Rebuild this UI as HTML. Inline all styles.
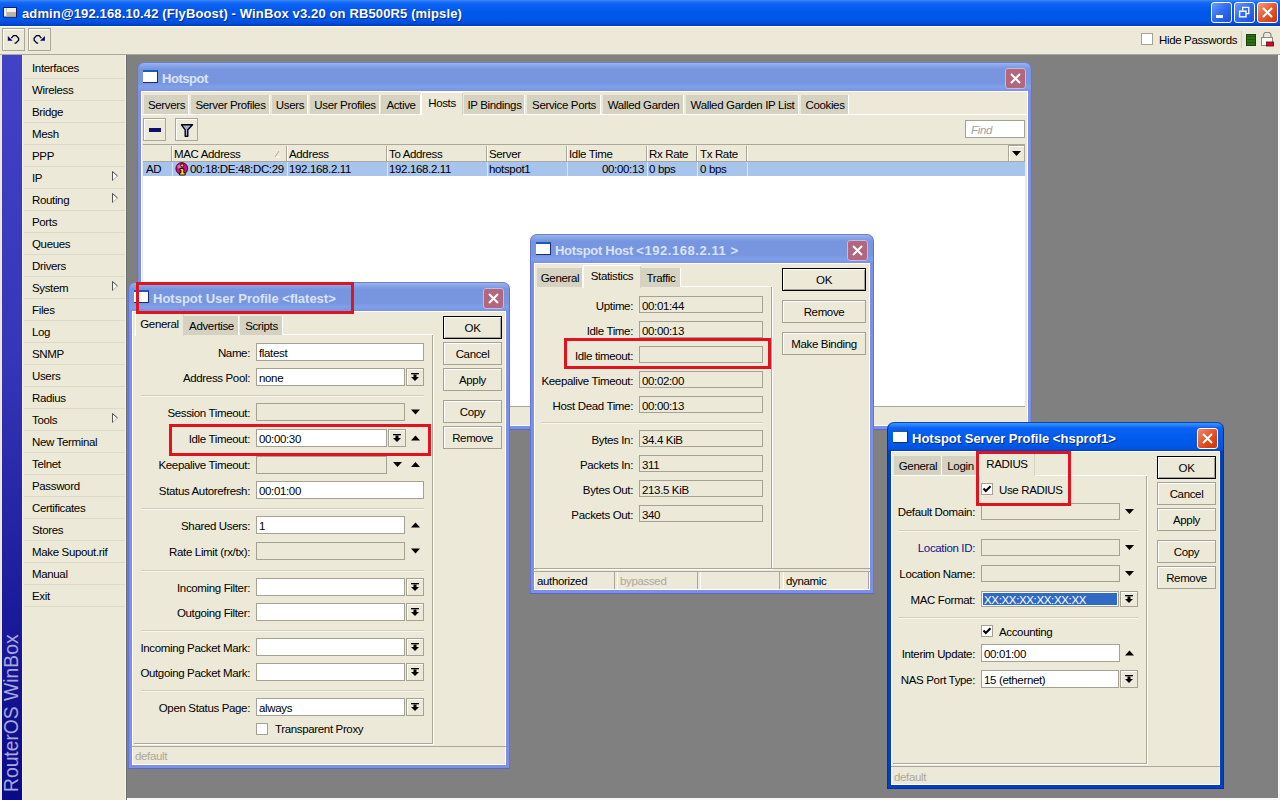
<!DOCTYPE html><html><head><meta charset="utf-8"><style>
*{margin:0;padding:0}
body{width:1280px;height:800px;overflow:hidden;position:relative;background:#808080;font-family:"Liberation Sans",sans-serif;font-size:11.5px;letter-spacing:-0.35px}
.a{position:absolute}
.t{position:absolute;line-height:13px;white-space:nowrap}
.win{position:absolute;box-sizing:border-box;border-radius:7px 7px 0 0;background:linear-gradient(#9AB6EE 0px,#8AA8EA 2px,#7896E0 6px,#7896E0 20px,#7EA0EA 24px,#7D8FE6 28px);border:1px solid #6474D2;border-top-color:#7080B8;border-bottom-color:#5A68C4}
.win.act{background:linear-gradient(#3C96FF 0px,#2A82FA 2px,#0A62F2 5px,#005CEC 14px,#0058E6 22px,#0052DE 26px,#0040C0 28px);border-color:#0030B0;border-top-color:#0846B8}
.wicon{position:absolute;width:15px;height:13px;box-sizing:border-box;background:#fff;border-top:2px solid #1C5AB8;border-bottom:1px solid #1A2F70;border-right:1px solid #1A2F70}
.wt{position:absolute;font-weight:bold;font-size:13px;line-height:16px;white-space:nowrap;letter-spacing:0}
.cbtn{position:absolute;width:21px;height:21px;box-sizing:border-box;border:1px solid #C4B8E8;border-radius:3px;background:#B3677C}
.cbtn svg{position:absolute;left:-1px;top:-1px}
.cbtn.act{background:linear-gradient(135deg,#F08A6C,#E04A1E 60%,#C8340C);border-color:#fff}
</style></head><body>
<div class="a" style="left:0px;top:0px;width:1280px;height:26px;background:linear-gradient(#3D8BF0 0px,#1A6CF8 2px,#0A60F2 5px,#0058EC 12px,#0056E8 20px,#004AD6 24px,#003AB0 26px);"></div>
<svg class="a" style="left:3px;top:7px" width="14" height="11"><rect x="0.5" y="0.5" width="13" height="9.5" fill="#F4F0EC" stroke="#102060" stroke-width="1"/><rect x="4" y="5" width="9" height="4.5" fill="#BFB49A"/><rect x="3" y="1" width="1" height="8.5" fill="#C8C8D0"/></svg>
<div class="wt" style="left:22px;top:6px;color:#fff;font-size:13px;letter-spacing:0.13px;text-shadow:1px 1px 0 #0A2A8A">admin@192.168.10.42 (FlyBoost) - WinBox v3.20 on RB500R5 (mipsle)</div>
<div class="a" style="left:1211px;top:2px;width:21px;height:21px;box-sizing:border-box;border:1px solid #fff;border-radius:3px;background:linear-gradient(135deg,#6A9BFF,#2F6AF0 50%,#1D50D8)"><svg class="a" style="left:-1px;top:-1px" width="21" height="21"><rect x="5" y="13" width="7" height="3" fill="#fff"/></svg></div>
<div class="a" style="left:1234px;top:2px;width:21px;height:21px;box-sizing:border-box;border:1px solid #fff;border-radius:3px;background:linear-gradient(135deg,#6A9BFF,#2F6AF0 50%,#1D50D8)"><svg class="a" style="left:-1px;top:-1px" width="21" height="21"><path d="M8.7 8.6 V5.4 H14.8 V11.6 H12.4" fill="none" stroke="#fff" stroke-width="1.3"/><rect x="5.6" y="9.2" width="6.4" height="5.6" fill="none" stroke="#fff" stroke-width="1.4"/></svg></div>
<div class="a" style="left:1257px;top:2px;width:21px;height:21px;box-sizing:border-box;border:1px solid #fff;border-radius:3px;background:linear-gradient(135deg,#F59B7C,#E35A2E 50%,#C4390F)"><svg class="a" style="left:-1px;top:-1px" width="21" height="21"><path d="M6 6 L15 15 M15 6 L6 15" stroke="#fff" stroke-width="2.2"/></svg></div>
<div class="a" style="left:0px;top:26px;width:1280px;height:29px;background:#ECE9D8;border-top:1px solid #fff;border-bottom:1px solid #ACA899;box-sizing:border-box;"></div>
<div class="a" style="left:2px;top:28px;width:23px;height:23px;box-sizing:border-box;border:1px solid #ACA899;box-shadow:inset 1px 1px 0 #fff;background:#ECE9D8"></div>
<div class="a" style="left:28px;top:28px;width:23px;height:23px;box-sizing:border-box;border:1px solid #ACA899;box-shadow:inset 1px 1px 0 #fff;background:#ECE9D8"></div>
<svg class="a" style="left:2px;top:28px" width="23" height="23"><path d="M9.4 10.2 L11.5 7.6 L14.2 7.6 L16.6 10.2 L16.6 12.3 L13.8 15.2 L12.5 15.2" fill="none" stroke="#000028" stroke-width="1.3"/><polygon points="5.8,7.9 5.8,12.8 10.7,12.8" fill="#0A0A60"/></svg>
<svg class="a" style="left:28px;top:28px" width="23" height="23"><path d="M13.3 10.2 L11.2 7.6 L8.5 7.6 L6.1 10.2 L6.1 12.3 L8.9 15.2 L10.2 15.2" fill="none" stroke="#000028" stroke-width="1.3"/><polygon points="16.9,7.9 16.9,12.8 12.0,12.8" fill="#0A0A60"/></svg>
<div class="a" style="left:1141px;top:33px;width:12px;height:12px;background:#fff;box-sizing:border-box;border:1px solid #A5A293;"></div>
<div class="t" style="top:34px;color:#000;left:1159px;">Hide Passwords</div>
<div class="a" style="left:1241px;top:31px;width:1px;height:17px;background:#D9C8C0;"></div>
<div class="a" style="left:1246px;top:34px;width:10px;height:12px;background:repeating-linear-gradient(#2E6E16 0px,#2E6E16 2px,#22580E 2px,#22580E 3px);box-shadow:inset 0 0 0 1px #1A440A;"></div>
<svg class="a" style="left:1260px;top:31px" width="16" height="16"><path d="M3.5 6.5 V3.5 L5 1.5 H9.5 L11 3.5 V6.5" fill="none" stroke="#8A8A8A" stroke-width="1.2"/><rect x="1.5" y="6.5" width="11" height="8" fill="#F8F8F2" stroke="#8A8A8A" stroke-width="1"/><rect x="6.5" y="11" width="7" height="4" fill="#C8101E" stroke="#700010" stroke-width="0.8"/></svg>
<div class="a" style="left:0px;top:55px;width:127px;height:745px;background:#ECE9D8;"></div>
<div class="a" style="left:2px;top:55px;width:20px;height:745px;background:linear-gradient(#4242C6,#3636B8 40%,#1A1A9A 75%,#0A0A88);"></div>
<div class="a" style="left:22px;top:55px;width:1px;height:745px;background:#F4F4FA;"></div>
<div class="a" style="left:126px;top:55px;width:1px;height:745px;background:#6E6E6E;"></div>
<div class="a" style="left:-68px;top:702px;width:160px;height:20px;transform:rotate(-90deg);color:#A9A9DA;font-size:19.3px;line-height:20px;letter-spacing:0;white-space:nowrap">RouterOS WinBox</div>
<div class="t" style="top:62px;color:#000;left:32px;">Interfaces</div>
<div class="a" style="left:24px;top:78px;width:101px;height:1px;background:#DCD9C8;"></div>
<div class="t" style="top:84px;color:#000;left:32px;">Wireless</div>
<div class="a" style="left:24px;top:100px;width:101px;height:1px;background:#DCD9C8;"></div>
<div class="t" style="top:106px;color:#000;left:32px;">Bridge</div>
<div class="a" style="left:24px;top:122px;width:101px;height:1px;background:#DCD9C8;"></div>
<div class="t" style="top:128px;color:#000;left:32px;">Mesh</div>
<div class="a" style="left:24px;top:144px;width:101px;height:1px;background:#DCD9C8;"></div>
<div class="t" style="top:150px;color:#000;left:32px;">PPP</div>
<div class="a" style="left:24px;top:166px;width:101px;height:1px;background:#DCD9C8;"></div>
<div class="t" style="top:172px;color:#000;left:32px;">IP</div>
<svg class="a" style="left:111px;top:170px" width="8" height="12"><polygon points="1.5,1.5 6.5,6 1.5,10.5" fill="#FAFAF6" stroke="#B8B8B0" stroke-width="1"/><path d="M1.5 1.5 L6.5 6 M1.5 1.5 V10.5" stroke="#555" stroke-width="1" fill="none"/></svg>
<div class="a" style="left:24px;top:188px;width:101px;height:1px;background:#DCD9C8;"></div>
<div class="t" style="top:194px;color:#000;left:32px;">Routing</div>
<svg class="a" style="left:111px;top:192px" width="8" height="12"><polygon points="1.5,1.5 6.5,6 1.5,10.5" fill="#FAFAF6" stroke="#B8B8B0" stroke-width="1"/><path d="M1.5 1.5 L6.5 6 M1.5 1.5 V10.5" stroke="#555" stroke-width="1" fill="none"/></svg>
<div class="a" style="left:24px;top:210px;width:101px;height:1px;background:#DCD9C8;"></div>
<div class="t" style="top:216px;color:#000;left:32px;">Ports</div>
<div class="a" style="left:24px;top:232px;width:101px;height:1px;background:#DCD9C8;"></div>
<div class="t" style="top:238px;color:#000;left:32px;">Queues</div>
<div class="a" style="left:24px;top:254px;width:101px;height:1px;background:#DCD9C8;"></div>
<div class="t" style="top:260px;color:#000;left:32px;">Drivers</div>
<div class="a" style="left:24px;top:276px;width:101px;height:1px;background:#DCD9C8;"></div>
<div class="t" style="top:282px;color:#000;left:32px;">System</div>
<svg class="a" style="left:111px;top:280px" width="8" height="12"><polygon points="1.5,1.5 6.5,6 1.5,10.5" fill="#FAFAF6" stroke="#B8B8B0" stroke-width="1"/><path d="M1.5 1.5 L6.5 6 M1.5 1.5 V10.5" stroke="#555" stroke-width="1" fill="none"/></svg>
<div class="a" style="left:24px;top:298px;width:101px;height:1px;background:#DCD9C8;"></div>
<div class="t" style="top:304px;color:#000;left:32px;">Files</div>
<div class="a" style="left:24px;top:320px;width:101px;height:1px;background:#DCD9C8;"></div>
<div class="t" style="top:326px;color:#000;left:32px;">Log</div>
<div class="a" style="left:24px;top:342px;width:101px;height:1px;background:#DCD9C8;"></div>
<div class="t" style="top:348px;color:#000;left:32px;">SNMP</div>
<div class="a" style="left:24px;top:364px;width:101px;height:1px;background:#DCD9C8;"></div>
<div class="t" style="top:370px;color:#000;left:32px;">Users</div>
<div class="a" style="left:24px;top:386px;width:101px;height:1px;background:#DCD9C8;"></div>
<div class="t" style="top:392px;color:#000;left:32px;">Radius</div>
<div class="a" style="left:24px;top:408px;width:101px;height:1px;background:#DCD9C8;"></div>
<div class="t" style="top:414px;color:#000;left:32px;">Tools</div>
<svg class="a" style="left:111px;top:412px" width="8" height="12"><polygon points="1.5,1.5 6.5,6 1.5,10.5" fill="#FAFAF6" stroke="#B8B8B0" stroke-width="1"/><path d="M1.5 1.5 L6.5 6 M1.5 1.5 V10.5" stroke="#555" stroke-width="1" fill="none"/></svg>
<div class="a" style="left:24px;top:430px;width:101px;height:1px;background:#DCD9C8;"></div>
<div class="t" style="top:436px;color:#000;left:32px;">New Terminal</div>
<div class="a" style="left:24px;top:452px;width:101px;height:1px;background:#DCD9C8;"></div>
<div class="t" style="top:458px;color:#000;left:32px;">Telnet</div>
<div class="a" style="left:24px;top:474px;width:101px;height:1px;background:#DCD9C8;"></div>
<div class="t" style="top:480px;color:#000;left:32px;">Password</div>
<div class="a" style="left:24px;top:496px;width:101px;height:1px;background:#DCD9C8;"></div>
<div class="t" style="top:502px;color:#000;left:32px;">Certificates</div>
<div class="a" style="left:24px;top:518px;width:101px;height:1px;background:#DCD9C8;"></div>
<div class="t" style="top:524px;color:#000;left:32px;">Stores</div>
<div class="a" style="left:24px;top:540px;width:101px;height:1px;background:#DCD9C8;"></div>
<div class="t" style="top:546px;color:#000;left:32px;">Make Supout.rif</div>
<div class="a" style="left:24px;top:562px;width:101px;height:1px;background:#DCD9C8;"></div>
<div class="t" style="top:568px;color:#000;left:32px;">Manual</div>
<div class="a" style="left:24px;top:584px;width:101px;height:1px;background:#DCD9C8;"></div>
<div class="t" style="top:590px;color:#000;left:32px;">Exit</div>
<div class="a" style="left:24px;top:606px;width:101px;height:1px;background:#DCD9C8;"></div>
<div class="a" style="left:127px;top:798px;width:1153px;height:2px;background:#F8F8F8;"></div>
<div class="a" style="left:1278px;top:55px;width:2px;height:745px;background:#F8F8F8;"></div>
<div class="a" style="left:125px;top:55px;width:1px;height:745px;background:#F6F3E6;"></div>
<div class="win" style="left:137px;top:62px;width:895px;height:368px"></div>
<div class="a" style="left:141px;top:91px;width:887px;height:335px;background:#ECE9D8;box-shadow:inset 1px 1px 0 #fff, inset -1px -1px 0 #fff;"></div>
<div class="wicon" style="left:143px;top:70px"></div>
<div class="wt" style="left:162px;top:71px;color:#D8E4F8;"><span style="letter-spacing:-0.45px">Hotspot</span></div>
<div class="cbtn" style="left:1005px;top:68px"><svg width="21" height="21"><path d="M6 6 L15 15 M15 6 L6 15" stroke="#fff" stroke-width="2"/></svg></div>
<div class="a" style="left:141px;top:114px;width:887px;height:1px;background:#fff;"></div>
<div class="a" style="left:144px;top:95px;width:45px;height:19px;background:#D6D2C2;box-shadow:inset -1px 0 0 #fff;"></div>
<div class="t" style="left:144px;width:45px;text-align:center;top:99px">Servers</div>
<div class="a" style="left:191px;top:95px;width:79px;height:19px;background:#D6D2C2;box-shadow:inset -1px 0 0 #fff;"></div>
<div class="t" style="left:191px;width:79px;text-align:center;top:99px">Server Profiles</div>
<div class="a" style="left:272px;top:95px;width:36px;height:19px;background:#D6D2C2;box-shadow:inset -1px 0 0 #fff;"></div>
<div class="t" style="left:272px;width:36px;text-align:center;top:99px">Users</div>
<div class="a" style="left:310px;top:95px;width:70px;height:19px;background:#D6D2C2;box-shadow:inset -1px 0 0 #fff;"></div>
<div class="t" style="left:310px;width:70px;text-align:center;top:99px">User Profiles</div>
<div class="a" style="left:381px;top:95px;width:40px;height:19px;background:#D6D2C2;box-shadow:inset -1px 0 0 #fff;"></div>
<div class="t" style="left:381px;width:40px;text-align:center;top:99px">Active</div>
<div class="a" style="left:464px;top:95px;width:61px;height:19px;background:#D6D2C2;box-shadow:inset -1px 0 0 #fff;"></div>
<div class="t" style="left:464px;width:61px;text-align:center;top:99px">IP Bindings</div>
<div class="a" style="left:527px;top:95px;width:74px;height:19px;background:#D6D2C2;box-shadow:inset -1px 0 0 #fff;"></div>
<div class="t" style="left:527px;width:74px;text-align:center;top:99px">Service Ports</div>
<div class="a" style="left:603px;top:95px;width:81px;height:19px;background:#D6D2C2;box-shadow:inset -1px 0 0 #fff;"></div>
<div class="t" style="left:603px;width:81px;text-align:center;top:99px">Walled Garden</div>
<div class="a" style="left:686px;top:95px;width:113px;height:19px;background:#D6D2C2;box-shadow:inset -1px 0 0 #fff;"></div>
<div class="t" style="left:686px;width:113px;text-align:center;top:99px">Walled Garden IP List</div>
<div class="a" style="left:801px;top:95px;width:48px;height:19px;background:#D6D2C2;box-shadow:inset -1px 0 0 #fff;"></div>
<div class="t" style="left:801px;width:48px;text-align:center;top:99px">Cookies</div>
<div class="a" style="left:421px;top:92px;width:42px;height:23px;background:#ECE9D8;box-shadow:inset 1px 1px 0 #fff, inset -1px 0 0 #D6D2C2;"></div>
<div class="t" style="left:421px;width:42px;text-align:center;top:97px">Hosts</div>
<div class="a" style="left:143px;top:118px;width:23px;height:23px;box-sizing:border-box;border:1px solid #ACA899;box-shadow:inset 1px 1px 0 #fff;background:#ECE9D8"></div>
<div class="a" style="left:175px;top:118px;width:23px;height:23px;box-sizing:border-box;border:1px solid #ACA899;box-shadow:inset 1px 1px 0 #fff;background:#ECE9D8"></div>
<div class="a" style="left:149px;top:128px;width:12px;height:4px;background:#10106A;"></div>
<svg class="a" style="left:175px;top:118px" width="22" height="23"><path d="M6.5 6.8 H17.5 L12.8 11.8 V18.2 H10.2 V11.8 Z" fill="#A9B0C6" stroke="#000018" stroke-width="1.4" stroke-linejoin="round"/></svg>
<div class="a" style="left:965px;top:120px;width:60px;height:18px;background:#fff;box-sizing:border-box;border:1px solid #A5A293;"></div>
<div class="t" style="top:124px;color:#A0A0A0;left:971px;font-style:italic;">Find</div>
<div class="a" style="left:143px;top:145px;width:882px;height:262px;background:#fff;"></div>
<div class="a" style="left:143px;top:144px;width:882px;height:18px;background:#ECE9D8;border-bottom:1px solid #ACA899;border-top:1px solid #ACA899;box-sizing:border-box;"></div>
<div class="a" style="left:171px;top:146px;width:1px;height:15px;background:#ACA899;"></div>
<div class="a" style="left:172px;top:146px;width:1px;height:15px;background:#fff;"></div>
<div class="a" style="left:286px;top:146px;width:1px;height:15px;background:#ACA899;"></div>
<div class="a" style="left:287px;top:146px;width:1px;height:15px;background:#fff;"></div>
<div class="a" style="left:386px;top:146px;width:1px;height:15px;background:#ACA899;"></div>
<div class="a" style="left:387px;top:146px;width:1px;height:15px;background:#fff;"></div>
<div class="a" style="left:486px;top:146px;width:1px;height:15px;background:#ACA899;"></div>
<div class="a" style="left:487px;top:146px;width:1px;height:15px;background:#fff;"></div>
<div class="a" style="left:566px;top:146px;width:1px;height:15px;background:#ACA899;"></div>
<div class="a" style="left:567px;top:146px;width:1px;height:15px;background:#fff;"></div>
<div class="a" style="left:646px;top:146px;width:1px;height:15px;background:#ACA899;"></div>
<div class="a" style="left:647px;top:146px;width:1px;height:15px;background:#fff;"></div>
<div class="a" style="left:696px;top:146px;width:1px;height:15px;background:#ACA899;"></div>
<div class="a" style="left:697px;top:146px;width:1px;height:15px;background:#fff;"></div>
<div class="a" style="left:746px;top:146px;width:1px;height:15px;background:#ACA899;"></div>
<div class="a" style="left:747px;top:146px;width:1px;height:15px;background:#fff;"></div>
<div class="a" style="left:1008px;top:146px;width:1px;height:15px;background:#ACA899;"></div>
<div class="a" style="left:1009px;top:146px;width:1px;height:15px;background:#fff;"></div>
<div class="a" style="left:1008px;top:145px;width:17px;height:17px;box-sizing:border-box;border:1px solid #ACA899;background:#ECE9D8;box-shadow:inset 1px 1px 0 #fff;"></div>
<svg class="a" style="left:0;top:0;width:1px;height:1px;overflow:visible"><polygon points="1012.0,151.0 1021.0,151.0 1016.5,156.0" fill="#000"/></svg>
<div class="t" style="top:148px;color:#000;left:174px;">MAC Address</div>
<div class="t" style="top:148px;color:#000;left:289px;">Address</div>
<div class="t" style="top:148px;color:#000;left:389px;">To Address</div>
<div class="t" style="top:148px;color:#000;left:489px;">Server</div>
<div class="t" style="top:148px;color:#000;left:569px;">Idle Time</div>
<div class="t" style="top:148px;color:#000;left:649px;">Rx Rate</div>
<div class="t" style="top:148px;color:#000;left:700px;">Tx Rate</div>
<svg class="a" style="left:274px;top:149px" width="8" height="10"><path d="M1 8 L5 2" stroke="#B0AEA0" stroke-width="1"/><path d="M2 8 L6 8" stroke="#fff" stroke-width="1"/></svg>
<div class="a" style="left:143px;top:162px;width:882px;height:14px;background:#A6C4EC;"></div>
<div class="a" style="left:172px;top:162px;width:1px;height:14px;background:#D8E6F8;"></div>
<div class="a" style="left:287px;top:162px;width:1px;height:14px;background:#D8E6F8;"></div>
<div class="a" style="left:387px;top:162px;width:1px;height:14px;background:#D8E6F8;"></div>
<div class="a" style="left:487px;top:162px;width:1px;height:14px;background:#D8E6F8;"></div>
<div class="a" style="left:567px;top:162px;width:1px;height:14px;background:#D8E6F8;"></div>
<div class="a" style="left:647px;top:162px;width:1px;height:14px;background:#D8E6F8;"></div>
<div class="a" style="left:697px;top:162px;width:1px;height:14px;background:#D8E6F8;"></div>
<div class="a" style="left:747px;top:162px;width:1px;height:14px;background:#D8E6F8;"></div>
<div class="t" style="top:163px;color:#000;left:146px;">AD</div>
<svg class="a" style="left:175px;top:162px" width="14" height="14"><circle cx="6.8" cy="6.5" r="5.9" fill="#C8107E" stroke="#300020" stroke-width="0.9"/><circle cx="4.6" cy="4.6" r="2.2" fill="#F060B8"/><circle cx="7.2" cy="3.4" r="1.6" fill="#E8D020" stroke="#200010" stroke-width="0.9"/><path d="M4.8 6.6 H8.8 V10.8 H10.2 V13 H4.6 V10.8 H6 V8.2 H4.8 Z" fill="#F8E020" stroke="#000" stroke-width="0.9"/></svg>
<div class="t" style="top:163px;color:#000;left:190px;">00:18:DE:48:DC:29</div>
<div class="t" style="top:163px;color:#000;left:289px;">192.168.2.11</div>
<div class="t" style="top:163px;color:#000;left:389px;">192.168.2.11</div>
<div class="t" style="top:163px;color:#000;left:489px;">hotspot1</div>
<div class="t" style="top:163px;color:#000;right:636px;text-align:right;">00:00:13</div>
<div class="t" style="top:163px;color:#000;left:649px;">0 bps</div>
<div class="t" style="top:163px;color:#000;left:700px;">0 bps</div>
<div class="a" style="left:141px;top:406px;width:884px;height:1px;background:#ACA899;"></div>
<div class="win" style="left:128px;top:282px;width:382px;height:487px"></div>
<div class="a" style="left:132px;top:311px;width:374px;height:454px;background:#ECE9D8;box-shadow:inset 1px 1px 0 #fff, inset -1px -1px 0 #fff;"></div>
<div class="wicon" style="left:134px;top:290px"></div>
<div class="wt" style="left:153px;top:291px;color:#D8E4F8;">Hotspot User Profile &lt;flatest&gt;</div>
<div class="cbtn" style="left:483px;top:288px"><svg width="21" height="21"><path d="M6 6 L15 15 M15 6 L6 15" stroke="#fff" stroke-width="2"/></svg></div>
<div class="a" style="left:134px;top:334px;width:299px;height:1px;background:#fff;"></div>
<div class="a" style="left:184px;top:316px;width:55px;height:19px;background:#D6D2C2;box-shadow:inset -1px 0 0 #fff;"></div>
<div class="t" style="left:184px;width:55px;text-align:center;top:320px">Advertise</div>
<div class="a" style="left:240px;top:316px;width:43px;height:19px;background:#D6D2C2;box-shadow:inset -1px 0 0 #fff;"></div>
<div class="t" style="left:240px;width:43px;text-align:center;top:320px">Scripts</div>
<div class="a" style="left:135px;top:313px;width:49px;height:23px;background:#ECE9D8;box-shadow:inset 1px 1px 0 #fff, inset -1px 0 0 #D6D2C2;"></div>
<div class="t" style="left:135px;width:49px;text-align:center;top:318px">General</div>
<div class="a" style="left:134px;top:335px;width:299px;height:409px;box-sizing:border-box;border-right:1px solid #ACA899;border-bottom:1px solid #ACA899;box-shadow:1px 1px 0 #fff;"></div>
<div class="t" style="top:347px;color:#000;right:1030px;text-align:right;">Name:</div>
<div class="a" style="left:256px;top:343px;width:168px;height:18px;background:#fff;box-sizing:border-box;border:1px solid #A5A293;"></div>
<div class="t" style="top:347px;color:#000;left:259px;">flatest</div>
<div class="t" style="top:372px;color:#000;right:1030px;text-align:right;">Address Pool:</div>
<div class="a" style="left:256px;top:368px;width:149px;height:18px;background:#fff;box-sizing:border-box;border:1px solid #A5A293;"></div>
<div class="t" style="top:372px;color:#000;left:259px;">none</div>
<div class="a" style="left:406px;top:368px;width:18px;height:18px;background:#ECE9D8;box-sizing:border-box;border:1px solid #A5A293;box-shadow:inset 1px 1px 0 #fff;"></div>
<svg class="a" style="left:406px;top:368px" width="18" height="18"><rect x="5.0" y="5.0" width="8" height="1.3" fill="#000"/><polygon points="5.0,9.0 13.0,9.0 9.0,13.0" fill="#000"/><rect x="7.5" y="6.5" width="3" height="3" fill="#000"/></svg>
<div class="a" style="left:141px;top:395px;width:283px;height:2px;border-top:1px solid #D3CFBF;border-bottom:1px solid #F8F6EE;box-sizing:border-box;"></div>
<div class="t" style="top:407px;color:#000;right:1030px;text-align:right;">Session Timeout:</div>
<div class="a" style="left:256px;top:403px;width:149px;height:18px;background:#ECE9D8;box-sizing:border-box;border:1px solid #A5A293;"></div>
<svg class="a" style="left:0;top:0;width:1px;height:1px;overflow:visible"><polygon points="411.0,409.5 420.0,409.5 415.5,414.5" fill="#000"/></svg>
<div class="t" style="top:433px;color:#000;right:1030px;text-align:right;">Idle Timeout:</div>
<div class="a" style="left:256px;top:429px;width:131px;height:18px;background:#fff;box-sizing:border-box;border:1px solid #A5A293;"></div>
<div class="t" style="top:433px;color:#000;left:259px;">00:00:30</div>
<div class="a" style="left:388px;top:429px;width:18px;height:18px;background:#ECE9D8;box-sizing:border-box;border:1px solid #A5A293;box-shadow:inset 1px 1px 0 #fff;"></div>
<svg class="a" style="left:388px;top:429px" width="18" height="18"><rect x="5.0" y="5.0" width="8" height="1.3" fill="#000"/><polygon points="5.0,9.0 13.0,9.0 9.0,13.0" fill="#000"/><rect x="7.5" y="6.5" width="3" height="3" fill="#000"/></svg>
<svg class="a" style="left:0;top:0;width:1px;height:1px;overflow:visible"><polygon points="411.0,440.5 420.0,440.5 415.5,435.5" fill="#000"/></svg>
<div class="t" style="top:459px;color:#000;right:1030px;text-align:right;">Keepalive Timeout:</div>
<div class="a" style="left:256px;top:456px;width:131px;height:18px;background:#ECE9D8;box-sizing:border-box;border:1px solid #A5A293;"></div>
<svg class="a" style="left:0;top:0;width:1px;height:1px;overflow:visible"><polygon points="393.0,462.0 402.0,462.0 397.5,467.0" fill="#000"/></svg>
<svg class="a" style="left:0;top:0;width:1px;height:1px;overflow:visible"><polygon points="411.0,467.0 420.0,467.0 415.5,462.0" fill="#000"/></svg>
<div class="t" style="top:485px;color:#000;right:1030px;text-align:right;">Status Autorefresh:</div>
<div class="a" style="left:256px;top:481px;width:168px;height:18px;background:#fff;box-sizing:border-box;border:1px solid #A5A293;"></div>
<div class="t" style="top:485px;color:#000;left:259px;">00:01:00</div>
<div class="a" style="left:141px;top:508px;width:283px;height:2px;border-top:1px solid #D3CFBF;border-bottom:1px solid #F8F6EE;box-sizing:border-box;"></div>
<div class="t" style="top:520px;color:#000;right:1030px;text-align:right;">Shared Users:</div>
<div class="a" style="left:256px;top:516px;width:149px;height:18px;background:#fff;box-sizing:border-box;border:1px solid #A5A293;"></div>
<div class="t" style="top:520px;color:#000;left:259px;">1</div>
<svg class="a" style="left:0;top:0;width:1px;height:1px;overflow:visible"><polygon points="411.0,527.5 420.0,527.5 415.5,522.5" fill="#000"/></svg>
<div class="t" style="top:546px;color:#000;right:1030px;text-align:right;">Rate Limit (rx/tx):</div>
<div class="a" style="left:256px;top:542px;width:149px;height:18px;background:#ECE9D8;box-sizing:border-box;border:1px solid #A5A293;"></div>
<svg class="a" style="left:0;top:0;width:1px;height:1px;overflow:visible"><polygon points="411.0,548.5 420.0,548.5 415.5,553.5" fill="#000"/></svg>
<div class="a" style="left:141px;top:570px;width:283px;height:2px;border-top:1px solid #D3CFBF;border-bottom:1px solid #F8F6EE;box-sizing:border-box;"></div>
<div class="t" style="top:582px;color:#000;right:1030px;text-align:right;">Incoming Filter:</div>
<div class="a" style="left:256px;top:578px;width:149px;height:18px;background:#fff;box-sizing:border-box;border:1px solid #A5A293;"></div>
<div class="a" style="left:406px;top:578px;width:18px;height:18px;background:#ECE9D8;box-sizing:border-box;border:1px solid #A5A293;box-shadow:inset 1px 1px 0 #fff;"></div>
<svg class="a" style="left:406px;top:578px" width="18" height="18"><rect x="5.0" y="5.0" width="8" height="1.3" fill="#000"/><polygon points="5.0,9.0 13.0,9.0 9.0,13.0" fill="#000"/><rect x="7.5" y="6.5" width="3" height="3" fill="#000"/></svg>
<div class="t" style="top:607px;color:#000;right:1030px;text-align:right;">Outgoing Filter:</div>
<div class="a" style="left:256px;top:603px;width:149px;height:18px;background:#fff;box-sizing:border-box;border:1px solid #A5A293;"></div>
<div class="a" style="left:406px;top:603px;width:18px;height:18px;background:#ECE9D8;box-sizing:border-box;border:1px solid #A5A293;box-shadow:inset 1px 1px 0 #fff;"></div>
<svg class="a" style="left:406px;top:603px" width="18" height="18"><rect x="5.0" y="5.0" width="8" height="1.3" fill="#000"/><polygon points="5.0,9.0 13.0,9.0 9.0,13.0" fill="#000"/><rect x="7.5" y="6.5" width="3" height="3" fill="#000"/></svg>
<div class="a" style="left:141px;top:630px;width:283px;height:2px;border-top:1px solid #D3CFBF;border-bottom:1px solid #F8F6EE;box-sizing:border-box;"></div>
<div class="t" style="top:642px;color:#000;right:1030px;text-align:right;">Incoming Packet Mark:</div>
<div class="a" style="left:256px;top:638px;width:149px;height:18px;background:#fff;box-sizing:border-box;border:1px solid #A5A293;"></div>
<div class="a" style="left:406px;top:638px;width:18px;height:18px;background:#ECE9D8;box-sizing:border-box;border:1px solid #A5A293;box-shadow:inset 1px 1px 0 #fff;"></div>
<svg class="a" style="left:406px;top:638px" width="18" height="18"><rect x="5.0" y="5.0" width="8" height="1.3" fill="#000"/><polygon points="5.0,9.0 13.0,9.0 9.0,13.0" fill="#000"/><rect x="7.5" y="6.5" width="3" height="3" fill="#000"/></svg>
<div class="t" style="top:667px;color:#000;right:1030px;text-align:right;">Outgoing Packet Mark:</div>
<div class="a" style="left:256px;top:663px;width:149px;height:18px;background:#fff;box-sizing:border-box;border:1px solid #A5A293;"></div>
<div class="a" style="left:406px;top:663px;width:18px;height:18px;background:#ECE9D8;box-sizing:border-box;border:1px solid #A5A293;box-shadow:inset 1px 1px 0 #fff;"></div>
<svg class="a" style="left:406px;top:663px" width="18" height="18"><rect x="5.0" y="5.0" width="8" height="1.3" fill="#000"/><polygon points="5.0,9.0 13.0,9.0 9.0,13.0" fill="#000"/><rect x="7.5" y="6.5" width="3" height="3" fill="#000"/></svg>
<div class="a" style="left:141px;top:690px;width:283px;height:2px;border-top:1px solid #D3CFBF;border-bottom:1px solid #F8F6EE;box-sizing:border-box;"></div>
<div class="t" style="top:702px;color:#000;right:1030px;text-align:right;">Open Status Page:</div>
<div class="a" style="left:256px;top:698px;width:149px;height:18px;background:#fff;box-sizing:border-box;border:1px solid #A5A293;"></div>
<div class="t" style="top:702px;color:#000;left:259px;">always</div>
<div class="a" style="left:406px;top:698px;width:18px;height:18px;background:#ECE9D8;box-sizing:border-box;border:1px solid #A5A293;box-shadow:inset 1px 1px 0 #fff;"></div>
<svg class="a" style="left:406px;top:698px" width="18" height="18"><rect x="5.0" y="5.0" width="8" height="1.3" fill="#000"/><polygon points="5.0,9.0 13.0,9.0 9.0,13.0" fill="#000"/><rect x="7.5" y="6.5" width="3" height="3" fill="#000"/></svg>
<div class="a" style="left:256px;top:723px;width:12px;height:12px;background:#fff;box-sizing:border-box;border:1px solid #A5A293;"></div>
<div class="t" style="top:723px;color:#000;left:275px;">Transparent Proxy</div>
<div class="a" style="left:443px;top:316px;width:59px;height:23px;background:#ECE9D8;box-sizing:border-box;border:1px solid #000;box-shadow:inset 1px 1px 0 #fff, inset -1px -1px 0 #A5A293;"></div>
<div class="t" style="left:443px;width:59px;text-align:center;top:322px">OK</div>
<div class="a" style="left:443px;top:342px;width:59px;height:23px;background:#ECE9D8;box-sizing:border-box;border:1px solid #A5A293;box-shadow:inset 1px 1px 0 #fff;"></div>
<div class="t" style="left:443px;width:59px;text-align:center;top:348px">Cancel</div>
<div class="a" style="left:443px;top:368px;width:59px;height:23px;background:#ECE9D8;box-sizing:border-box;border:1px solid #A5A293;box-shadow:inset 1px 1px 0 #fff;"></div>
<div class="t" style="left:443px;width:59px;text-align:center;top:374px">Apply</div>
<div class="a" style="left:443px;top:400px;width:59px;height:23px;background:#ECE9D8;box-sizing:border-box;border:1px solid #A5A293;box-shadow:inset 1px 1px 0 #fff;"></div>
<div class="t" style="left:443px;width:59px;text-align:center;top:406px">Copy</div>
<div class="a" style="left:443px;top:426px;width:59px;height:23px;background:#ECE9D8;box-sizing:border-box;border:1px solid #A5A293;box-shadow:inset 1px 1px 0 #fff;"></div>
<div class="t" style="left:443px;width:59px;text-align:center;top:432px">Remove</div>
<div class="a" style="left:132px;top:746px;width:374px;height:1px;background:#ACA899;"></div>
<div class="t" style="top:750px;color:#ACA899;left:135px;">default</div>
<div class="a" style="left:136px;top:282px;width:218px;height:32px;box-sizing:border-box;border:3px solid #E0141E;"></div>
<div class="a" style="left:169px;top:424px;width:262px;height:32px;box-sizing:border-box;border:3px solid #E0141E;"></div>
<div class="win" style="left:530px;top:234px;width:344px;height:360px"></div>
<div class="a" style="left:534px;top:263px;width:336px;height:327px;background:#ECE9D8;box-shadow:inset 1px 1px 0 #fff, inset -1px -1px 0 #fff;"></div>
<div class="wicon" style="left:536px;top:242px"></div>
<div class="wt" style="left:555px;top:243px;color:#D8E4F8;"><span style="letter-spacing:-0.3px">Hotspot Host </span><span style="letter-spacing:0.55px">&lt;192.168.2.11 &gt;</span></div>
<div class="cbtn" style="left:847px;top:240px"><svg width="21" height="21"><path d="M6 6 L15 15 M15 6 L6 15" stroke="#fff" stroke-width="2"/></svg></div>
<div class="a" style="left:536px;top:286px;width:236px;height:1px;background:#fff;"></div>
<div class="a" style="left:537px;top:268px;width:46px;height:19px;background:#D6D2C2;box-shadow:inset -1px 0 0 #fff;"></div>
<div class="t" style="left:537px;width:46px;text-align:center;top:272px">General</div>
<div class="a" style="left:641px;top:268px;width:40px;height:19px;background:#D6D2C2;box-shadow:inset -1px 0 0 #fff;"></div>
<div class="t" style="left:641px;width:40px;text-align:center;top:272px">Traffic</div>
<div class="a" style="left:583px;top:265px;width:58px;height:23px;background:#ECE9D8;box-shadow:inset 1px 1px 0 #fff, inset -1px 0 0 #D6D2C2;"></div>
<div class="t" style="left:583px;width:58px;text-align:center;top:270px">Statistics</div>
<div class="a" style="left:536px;top:287px;width:236px;height:282px;box-sizing:border-box;border-right:1px solid #ACA899;border-bottom:1px solid #ACA899;box-shadow:1px 1px 0 #fff;"></div>
<div class="t" style="top:300px;color:#000;right:647px;text-align:right;">Uptime:</div>
<div class="a" style="left:639px;top:296px;width:124px;height:17px;background:#ECE9D8;box-sizing:border-box;border:1px solid #A5A293;"></div>
<div class="t" style="top:300px;color:#000;left:642px;">00:01:44</div>
<div class="t" style="top:325px;color:#000;right:647px;text-align:right;">Idle Time:</div>
<div class="a" style="left:639px;top:321px;width:124px;height:17px;background:#ECE9D8;box-sizing:border-box;border:1px solid #A5A293;"></div>
<div class="t" style="top:325px;color:#000;left:642px;">00:00:13</div>
<div class="t" style="top:350px;color:#000;right:647px;text-align:right;">Idle timeout:</div>
<div class="a" style="left:639px;top:346px;width:124px;height:17px;background:#ECE9D8;box-sizing:border-box;border:1px solid #A5A293;"></div>
<div class="t" style="top:375px;color:#000;right:647px;text-align:right;">Keepalive Timeout:</div>
<div class="a" style="left:639px;top:371px;width:124px;height:17px;background:#ECE9D8;box-sizing:border-box;border:1px solid #A5A293;"></div>
<div class="t" style="top:375px;color:#000;left:642px;">00:02:00</div>
<div class="t" style="top:400px;color:#000;right:647px;text-align:right;">Host Dead Time:</div>
<div class="a" style="left:639px;top:396px;width:124px;height:17px;background:#ECE9D8;box-sizing:border-box;border:1px solid #A5A293;"></div>
<div class="t" style="top:400px;color:#000;left:642px;">00:00:13</div>
<div class="a" style="left:541px;top:422px;width:222px;height:2px;border-top:1px solid #D3CFBF;border-bottom:1px solid #F8F6EE;box-sizing:border-box;"></div>
<div class="t" style="top:434px;color:#000;right:647px;text-align:right;">Bytes In:</div>
<div class="a" style="left:639px;top:430px;width:124px;height:17px;background:#ECE9D8;box-sizing:border-box;border:1px solid #A5A293;"></div>
<div class="t" style="top:434px;color:#000;left:642px;">34.4 KiB</div>
<div class="t" style="top:459px;color:#000;right:647px;text-align:right;">Packets In:</div>
<div class="a" style="left:639px;top:455px;width:124px;height:17px;background:#ECE9D8;box-sizing:border-box;border:1px solid #A5A293;"></div>
<div class="t" style="top:459px;color:#000;left:642px;">311</div>
<div class="t" style="top:484px;color:#000;right:647px;text-align:right;">Bytes Out:</div>
<div class="a" style="left:639px;top:480px;width:124px;height:17px;background:#ECE9D8;box-sizing:border-box;border:1px solid #A5A293;"></div>
<div class="t" style="top:484px;color:#000;left:642px;">213.5 KiB</div>
<div class="t" style="top:509px;color:#000;right:647px;text-align:right;">Packets Out:</div>
<div class="a" style="left:639px;top:505px;width:124px;height:17px;background:#ECE9D8;box-sizing:border-box;border:1px solid #A5A293;"></div>
<div class="t" style="top:509px;color:#000;left:642px;">340</div>
<div class="a" style="left:782px;top:268px;width:84px;height:23px;background:#ECE9D8;box-sizing:border-box;border:1px solid #000;box-shadow:inset 1px 1px 0 #fff, inset -1px -1px 0 #A5A293;"></div>
<div class="t" style="left:782px;width:84px;text-align:center;top:274px">OK</div>
<div class="a" style="left:782px;top:300px;width:84px;height:23px;background:#ECE9D8;box-sizing:border-box;border:1px solid #A5A293;box-shadow:inset 1px 1px 0 #fff;"></div>
<div class="t" style="left:782px;width:84px;text-align:center;top:306px">Remove</div>
<div class="a" style="left:782px;top:332px;width:84px;height:23px;background:#ECE9D8;box-sizing:border-box;border:1px solid #A5A293;box-shadow:inset 1px 1px 0 #fff;"></div>
<div class="t" style="left:782px;width:84px;text-align:center;top:338px">Make Binding</div>
<div class="a" style="left:534px;top:568px;width:336px;height:1px;background:#ACA899;"></div>
<div class="a" style="left:534px;top:571px;width:336px;height:1px;background:#ACA899;"></div>
<div class="a" style="left:534px;top:572px;width:81px;height:17px;box-sizing:border-box;border-right:1px solid #ACA899;border-left:1px solid #fff;"></div>
<div class="t" style="top:575px;color:#000;left:537px;">authorized</div>
<div class="a" style="left:617px;top:572px;width:81px;height:17px;box-sizing:border-box;border-right:1px solid #ACA899;border-left:1px solid #fff;"></div>
<div class="t" style="top:575px;color:#ACA899;left:620px;">bypassed</div>
<div class="a" style="left:700px;top:572px;width:80px;height:17px;box-sizing:border-box;border-right:1px solid #ACA899;border-left:1px solid #fff;"></div>
<div class="a" style="left:783px;top:572px;width:86px;height:17px;box-sizing:border-box;border-right:1px solid #ACA899;border-left:1px solid #fff;"></div>
<div class="t" style="top:575px;color:#000;left:786px;">dynamic</div>
<div class="a" style="left:564px;top:338px;width:207px;height:31px;box-sizing:border-box;border:3px solid #E0141E;"></div>
<div class="win act" style="left:887px;top:422px;width:337px;height:367px"></div>
<div class="a" style="left:891px;top:451px;width:329px;height:334px;background:#ECE9D8;box-shadow:inset 1px 1px 0 #fff, inset -1px -1px 0 #fff;"></div>
<div class="wicon" style="left:893px;top:430px"></div>
<div class="wt" style="left:912px;top:431px;color:#fff;text-shadow:1px 1px 0 #0A2A8A;">Hotspot Server Profile &lt;hsprof1&gt;</div>
<div class="cbtn act" style="left:1197px;top:428px"><svg width="21" height="21"><path d="M6 6 L15 15 M15 6 L6 15" stroke="#fff" stroke-width="2"/></svg></div>
<div class="a" style="left:893px;top:475px;width:254px;height:1px;background:#fff;"></div>
<div class="a" style="left:894px;top:456px;width:48px;height:19px;background:#D6D2C2;box-shadow:inset -1px 0 0 #fff;"></div>
<div class="t" style="left:894px;width:48px;text-align:center;top:460px">General</div>
<div class="a" style="left:942px;top:456px;width:37px;height:19px;background:#D6D2C2;box-shadow:inset -1px 0 0 #fff;"></div>
<div class="t" style="left:942px;width:37px;text-align:center;top:460px">Login</div>
<div class="a" style="left:979px;top:453px;width:56px;height:23px;background:#ECE9D8;box-shadow:inset 1px 1px 0 #fff, inset -1px 0 0 #D6D2C2;"></div>
<div class="t" style="left:979px;width:56px;text-align:center;top:458px">RADIUS</div>
<div class="a" style="left:893px;top:476px;width:254px;height:288px;box-sizing:border-box;border-right:1px solid #ACA899;border-bottom:1px solid #ACA899;box-shadow:1px 1px 0 #fff;"></div>
<div class="a" style="left:981px;top:483px;width:12px;height:12px;background:#fff;box-sizing:border-box;border:1px solid #A5A293;"></div>
<svg class="a" style="left:981px;top:483px" width="12" height="12"><polyline points="2.5,5.5 4.8,8 9.5,3.2" fill="none" stroke="#000" stroke-width="2"/></svg>
<div class="t" style="top:484px;color:#000;left:999px;">Use RADIUS</div>
<div class="t" style="top:506px;color:#000;right:305px;text-align:right;">Default Domain:</div>
<div class="a" style="left:981px;top:503px;width:139px;height:17px;background:#ECE9D8;box-sizing:border-box;border:1px solid #A5A293;"></div>
<svg class="a" style="left:0;top:0;width:1px;height:1px;overflow:visible"><polygon points="1125.0,509.0 1134.0,509.0 1129.5,514.0" fill="#000"/></svg>
<div class="a" style="left:898px;top:530px;width:240px;height:2px;border-top:1px solid #D3CFBF;border-bottom:1px solid #F8F6EE;box-sizing:border-box;"></div>
<div class="t" style="top:542px;color:#12128C;right:305px;text-align:right;">Location ID:</div>
<div class="a" style="left:981px;top:539px;width:139px;height:17px;background:#ECE9D8;box-sizing:border-box;border:1px solid #A5A293;"></div>
<svg class="a" style="left:0;top:0;width:1px;height:1px;overflow:visible"><polygon points="1125.0,545.0 1134.0,545.0 1129.5,550.0" fill="#000"/></svg>
<div class="t" style="top:568px;color:#000;right:305px;text-align:right;">Location Name:</div>
<div class="a" style="left:981px;top:565px;width:139px;height:17px;background:#ECE9D8;box-sizing:border-box;border:1px solid #A5A293;"></div>
<svg class="a" style="left:0;top:0;width:1px;height:1px;overflow:visible"><polygon points="1125.0,571.0 1134.0,571.0 1129.5,576.0" fill="#000"/></svg>
<div class="t" style="top:594px;color:#000;right:305px;text-align:right;">MAC Format:</div>
<div class="a" style="left:981px;top:591px;width:138px;height:16px;background:#fff;box-sizing:border-box;border:1px solid #A5A293;"></div>
<div class="a" style="left:983px;top:593px;width:134px;height:12px;background:#316AC5;"></div>
<div class="t" style="top:594px;color:#fff;left:984px;">XX:XX:XX:XX:XX:XX</div>
<div class="a" style="left:1120px;top:591px;width:18px;height:16px;background:#ECE9D8;box-sizing:border-box;border:1px solid #A5A293;box-shadow:inset 1px 1px 0 #fff;"></div>
<svg class="a" style="left:1120px;top:591px" width="18" height="16"><rect x="5.0" y="4.0" width="8" height="1.3" fill="#000"/><polygon points="5.0,8.0 13.0,8.0 9.0,12.0" fill="#000"/><rect x="7.5" y="5.5" width="3" height="3" fill="#000"/></svg>
<div class="a" style="left:898px;top:617px;width:240px;height:2px;border-top:1px solid #D3CFBF;border-bottom:1px solid #F8F6EE;box-sizing:border-box;"></div>
<div class="a" style="left:981px;top:625px;width:12px;height:12px;background:#fff;box-sizing:border-box;border:1px solid #A5A293;"></div>
<svg class="a" style="left:981px;top:625px" width="12" height="12"><polyline points="2.5,5.5 4.8,8 9.5,3.2" fill="none" stroke="#000" stroke-width="2"/></svg>
<div class="t" style="top:626px;color:#000;left:999px;">Accounting</div>
<div class="t" style="top:648px;color:#000;right:305px;text-align:right;">Interim Update:</div>
<div class="a" style="left:981px;top:644px;width:139px;height:18px;background:#fff;box-sizing:border-box;border:1px solid #A5A293;"></div>
<div class="t" style="top:648px;color:#000;left:984px;">00:01:00</div>
<svg class="a" style="left:0;top:0;width:1px;height:1px;overflow:visible"><polygon points="1125.0,655.5 1134.0,655.5 1129.5,650.5" fill="#000"/></svg>
<div class="t" style="top:674px;color:#000;right:305px;text-align:right;">NAS Port Type:</div>
<div class="a" style="left:981px;top:670px;width:138px;height:18px;background:#fff;box-sizing:border-box;border:1px solid #A5A293;"></div>
<div class="t" style="top:674px;color:#000;left:984px;">15 (ethernet)</div>
<div class="a" style="left:1120px;top:670px;width:18px;height:18px;background:#ECE9D8;box-sizing:border-box;border:1px solid #A5A293;box-shadow:inset 1px 1px 0 #fff;"></div>
<svg class="a" style="left:1120px;top:670px" width="18" height="18"><rect x="5.0" y="5.0" width="8" height="1.3" fill="#000"/><polygon points="5.0,9.0 13.0,9.0 9.0,13.0" fill="#000"/><rect x="7.5" y="6.5" width="3" height="3" fill="#000"/></svg>
<div class="a" style="left:1157px;top:456px;width:59px;height:23px;background:#ECE9D8;box-sizing:border-box;border:1px solid #000;box-shadow:inset 1px 1px 0 #fff, inset -1px -1px 0 #A5A293;"></div>
<div class="t" style="left:1157px;width:59px;text-align:center;top:462px">OK</div>
<div class="a" style="left:1157px;top:482px;width:59px;height:23px;background:#ECE9D8;box-sizing:border-box;border:1px solid #A5A293;box-shadow:inset 1px 1px 0 #fff;"></div>
<div class="t" style="left:1157px;width:59px;text-align:center;top:488px">Cancel</div>
<div class="a" style="left:1157px;top:508px;width:59px;height:23px;background:#ECE9D8;box-sizing:border-box;border:1px solid #A5A293;box-shadow:inset 1px 1px 0 #fff;"></div>
<div class="t" style="left:1157px;width:59px;text-align:center;top:514px">Apply</div>
<div class="a" style="left:1157px;top:540px;width:59px;height:23px;background:#ECE9D8;box-sizing:border-box;border:1px solid #A5A293;box-shadow:inset 1px 1px 0 #fff;"></div>
<div class="t" style="left:1157px;width:59px;text-align:center;top:546px">Copy</div>
<div class="a" style="left:1157px;top:566px;width:59px;height:23px;background:#ECE9D8;box-sizing:border-box;border:1px solid #A5A293;box-shadow:inset 1px 1px 0 #fff;"></div>
<div class="t" style="left:1157px;width:59px;text-align:center;top:572px">Remove</div>
<div class="a" style="left:891px;top:766px;width:329px;height:1px;background:#ACA899;"></div>
<div class="t" style="top:771px;color:#ACA899;left:894px;">default</div>
<div class="a" style="left:976px;top:451px;width:95px;height:55px;box-sizing:border-box;border:3px solid #E0141E;"></div>
</body></html>
